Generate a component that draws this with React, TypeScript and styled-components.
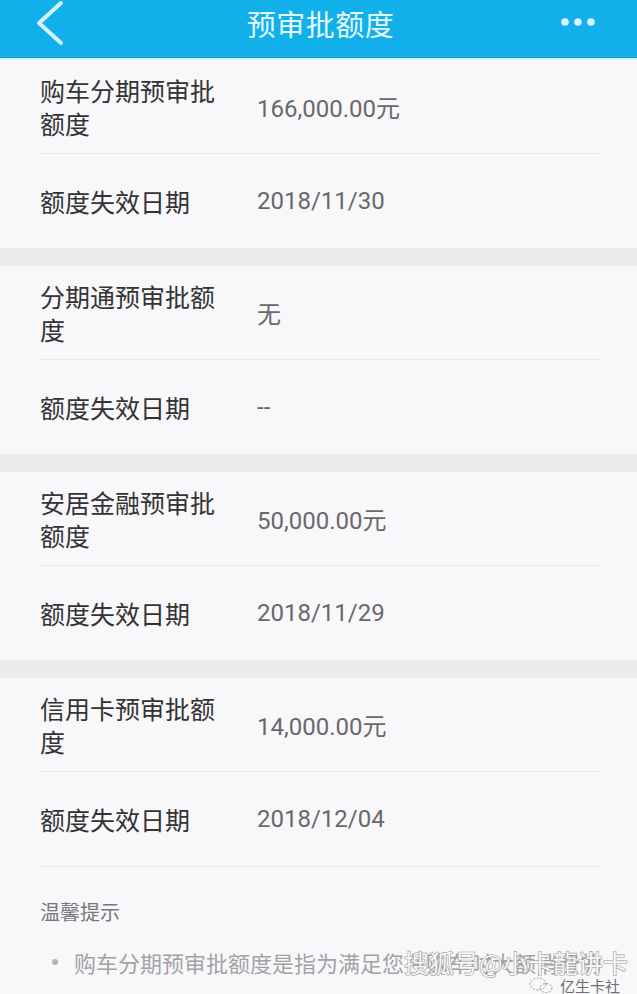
import styled, { createGlobalStyle } from 'styled-components';

/* Data */
const sections = [
  { title: '购车分期预审批额度', amount: '166,000.00元', expiry: '2018/11/30' },
  { title: '分期通预审批额度', amount: '无', expiry: '--' },
  { title: '安居金融预审批额度', amount: '50,000.00元', expiry: '2018/11/29' },
  { title: '信用卡预审批额度', amount: '14,000.00元', expiry: '2018/12/04' },
];

/* Styles */
const GlobalStyle = createGlobalStyle`
  html, body {
    margin: 0;
    padding: 0;
    background: #f8f8fa;
  }
  body {
    font-family: Roboto, "Noto Sans CJK SC", sans-serif;
  }
`;

const Page = styled.div`
  width: 637px;
  height: 994px;
  overflow: hidden;
  position: relative;
  background: #f8f8fa;
`;

const Header = styled.header`
  height: 57px;
  background: #12b0ea;
  border-bottom: 1px solid #1b97c6;
  box-shadow: 0 2px 0 #d4f5fc;
  margin-bottom: 2px;

  display: flex;
  align-items: center;
  justify-content: space-between;
  padding: 0 38px 0 36px;
`;

const Title = styled.h1`
  margin: 0;
  font-family: "Noto Sans CJK SC", sans-serif;
  font-size: 29px;
  font-weight: 400;
  color: #e4f8ff;
  letter-spacing: 0.5px;
  position: relative;
  top: -6px;
  left: 3px;
`;

const IconBox = styled.div`
  width: 40px;
  height: 57px;
  display: flex;
  align-items: center;
`;

const Section = styled.section`
  background: #f8f8fa;
  border-bottom: 18px solid #ebebed;

  &:last-of-type {
    border-bottom: none;
  }
`;

const Row = styled.div<{ $divider?: boolean }>`
  height: ${(p) => (p.$divider ? '93px' : '94px')};
  margin: 0 37px 0 40px;
  border-bottom: ${(p) => (p.$divider ? '1px solid #e6e6e9' : 'none')};

  display: flex;
  align-items: center;
`;

const Label = styled.div`
  width: 182px;
  margin-right: 35px;
  flex-shrink: 0;
  font-family: "Noto Sans CJK SC", sans-serif;
  font-size: 25px;
  line-height: 33px;
  color: #333336;
`;

const Value = styled.div`
  font-family: Roboto, "Noto Sans CJK SC", sans-serif;
  font-size: 24px;
  color: #68686c;
`;

const LastDivider = styled.div`
  margin: 0 37px 0 40px;
  border-top: 1px solid #e6e6e9;
`;

const Tips = styled.div`
  padding: 29px 37px 0 40px;
  font-family: "Noto Sans CJK SC", sans-serif;
`;

const TipsTitle = styled.div`
  font-size: 20px;
  line-height: 32px;
  color: #77777a;
`;

const TipItem = styled.div`
  margin-top: 18px;
  display: flex;
  align-items: center;
  font-size: 22px;
  line-height: 32px;
  color: #a2a2a6;
  white-space: nowrap;
`;

const Bullet = styled.span`
  flex-shrink: 0;
  width: 6px;
  height: 6px;
  border-radius: 50%;
  background: #b4b4b8;
  margin: 0 16px 0 12px;
`;

const Watermark = styled.div`
  position: absolute;
  left: 404px;
  top: 949px;
  font-family: "Noto Sans CJK SC", sans-serif;
  font-size: 25px;
  line-height: 27px;
  color: rgba(255, 255, 255, 0.92);
  -webkit-text-stroke: 1.2px #9c9ca0;
  paint-order: stroke fill;
  white-space: nowrap;
`;

const Brand = styled.div`
  position: absolute;
  left: 528px;
  top: 977px;
  display: flex;
  align-items: center;
  gap: 6px;
  font-family: "Noto Sans CJK SC", sans-serif;
  font-size: 15px;
  line-height: 17px;
  color: #6e6e72;
  white-space: nowrap;
`;

function BackIcon() {
  return (
    <svg width="30" height="57" viewBox="0 0 30 57">
      <polyline
        points="25,3 3,23 25,43"
        fill="none"
        stroke="#d2f4ff"
        strokeWidth="4"
        strokeLinecap="round"
        strokeLinejoin="round"
      />
    </svg>
  );
}

function MoreIcon() {
  return (
    <svg width="40" height="57" viewBox="0 0 40 57">
      {[6, 19, 32].map((x) => (
        <circle key={x} cx={x} cy={22} r={3.8} fill="#d8f6ff" />
      ))}
    </svg>
  );
}

function BrandLogo() {
  return (
    <svg width="26" height="17" viewBox="0 0 26 17">
      <g fill="none" stroke="#8a8a8e" strokeWidth="0.9" strokeDasharray="2 1.5">
        <ellipse cx="10" cy="7" rx="8" ry="6" />
        <ellipse cx="18" cy="11" rx="6" ry="4.5" />
      </g>
    </svg>
  );
}

function App() {
  return (
    <Page>
      <GlobalStyle />
      <Header>
        <IconBox>
          <BackIcon />
        </IconBox>
        <Title>预审批额度</Title>
        <IconBox>
          <MoreIcon />
        </IconBox>
      </Header>

      {sections.map((s) => (
        <Section key={s.title}>
          <Row $divider>
            <Label>{s.title}</Label>
            <Value>{s.amount}</Value>
          </Row>
          <Row>
            <Label>额度失效日期</Label>
            <Value>{s.expiry}</Value>
          </Row>
        </Section>
      ))}

      <LastDivider />
      <Tips>
        <TipsTitle>温馨提示</TipsTitle>
        <TipItem>
          <Bullet />
          购车分期预审批额度是指为满足您在购车时大额消费的
        </TipItem>
      </Tips>

      <Watermark>搜狐号@小卡龍讲卡</Watermark>
      <Brand>
        <BrandLogo />
        亿生卡社
      </Brand>
    </Page>
  );
}

export default App;
